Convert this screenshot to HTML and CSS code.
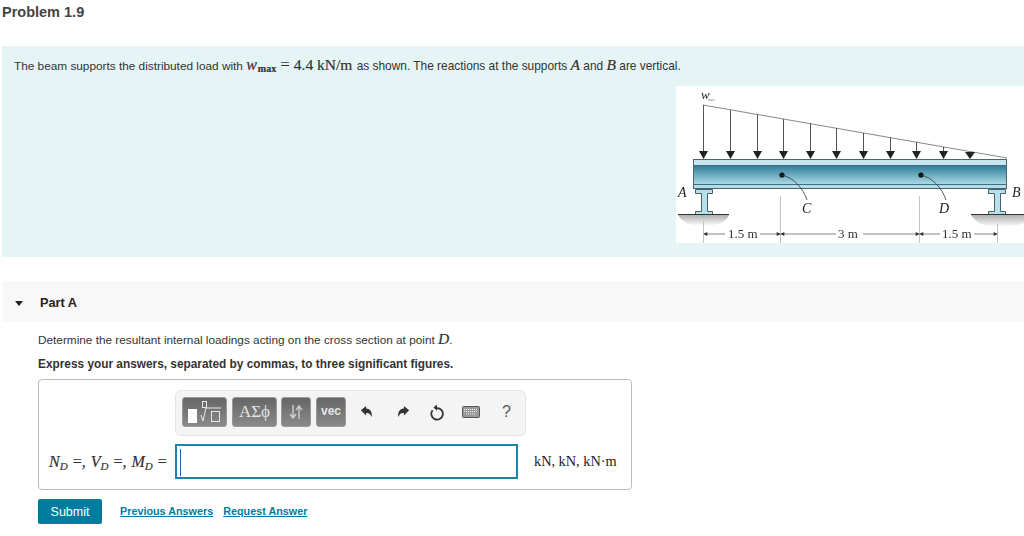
FILE: index.html
```html
<!DOCTYPE html>
<html lang="en">
<head>
<meta charset="utf-8">
<title>Problem 1.9</title>
<link rel="stylesheet" href="styles.css">
</head>
<body>
<h1 class="title">Problem 1.9</h1>
<section class="intro">
  <p class="intro-text"><span class="tight">The beam supports the distributed load with</span> <span class="math math-load"><i class="w">w</i><sub>max</sub><span class="eq">=</span><span class="val">4.4 kN/m</span></span> as shown. The reactions at the supports <i class="math var">A</i> and <i class="math var">B</i> are vertical.</p>
  <div class="figure">
    <svg width="348" height="157" viewBox="0 0 348 157" xmlns="http://www.w3.org/2000/svg">
      <defs>
        <linearGradient id="beam" x1="0" y1="0" x2="0" y2="1">
          <stop offset="0" stop-color="#2c7a97"/>
          <stop offset="1" stop-color="#a9d8e4"/>
        </linearGradient>
        <linearGradient id="ground" x1="0" y1="0" x2="0" y2="1">
          <stop offset="0" stop-color="#b0b0b0"/>
          <stop offset="1" stop-color="#ffffff"/>
        </linearGradient>
        <marker id="tip" viewBox="0 0 6 6" refX="5" refY="3" markerWidth="7" markerHeight="5" orient="auto">
          <path d="M0 0L6 3L0 6Z" fill="#333"/>
        </marker>
      </defs>
      <text x="25" y="13" class="fig-w">w</text>
      <text x="32" y="15" class="fig-tiny">max</text>
      <path d="M27 19L331 72" stroke="#888" fill="none"/>
      <path d="M27.500 19V66M54.500 24V66M81.500 28V66M107.500 33V66M134.500 37V66M160.500 42V66M187.500 47V66M214.500 51V66M240.500 56V66M267.500 61V66" stroke="#555"/>
      <g fill="#222">
        <path d="M23 65L32 65L27.500 73Z"/><path d="M50 65L59 65L54.500 73Z"/><path d="M77 65L86 65L81.500 73Z"/><path d="M103 65L112 65L107.500 73Z"/><path d="M130 65L139 65L134.500 73Z"/><path d="M156 65L165 65L160.500 73Z"/><path d="M183 65L192 65L187.500 73Z"/><path d="M210 65L219 65L214.500 73Z"/><path d="M236 65L245 65L240.500 73Z"/><path d="M263 65L272 65L267.500 73Z"/><path d="M289 66L299 66L294 73Z"/>
      </g>
      <rect x="17.500" y="73.500" width="313" height="29" fill="#b5dde8" stroke="#4b6470"/>
      <rect x="18" y="79" width="312" height="19" fill="url(#beam)"/>
      <rect x="18" y="74" width="312" height="5" fill="#c9e6ee"/>
      <path d="M17 79.500H331M17 98.500H331" stroke="#3d6e82"/>
      <circle cx="106" cy="89" r="2.600" fill="#111"/>
      <circle cx="245" cy="89" r="2.600" fill="#111"/>
      <path d="M106 89C118 92 127 102 131 114M245 89C257 92 266 102 270 114" fill="none" stroke="#333" stroke-width=".8"/>
      <g fill="#b5e0ec" stroke="#47606c">
        <path d="M19.500 103.500H36.500V107.500H31.500V125.500H36.500V128.500H19.500V125.500H25.500V107.500H19.500Z"/>
        <path d="M312.500 103.500H329.500V107.500H324.500V125.500H329.500V128.500H312.500V125.500H318.500V107.500H312.500Z"/>
      </g>
      <path d="M2 129H53C50 136 42 140 27 140C14 140 6 136 2 129Z" fill="url(#ground)"/>
      <path d="M295 129H348V137C340 140 330 141 320 141C308 141 299 136 295 129Z" fill="url(#ground)"/>
      <path d="M2 128.500H53M295 128.500H348" stroke="#333"/>
      <path d="M27.500 135V157M104.500 110V157M243.500 110V157M321.500 138V157" stroke="#c4c4c4" fill="none"/>
      <g stroke="#666" fill="none" stroke-width=".8" marker-end="url(#tip)">
        <path d="M49 148H28"/><path d="M84 148H104"/><path d="M160 148H105"/>
        <path d="M187 148H243"/><path d="M264 148H244"/><path d="M298 148H321"/>
      </g>
      <text x="52" y="152" class="fig-dim">1.5 m</text>
      <text x="162" y="152" class="fig-dim">3 m</text>
      <text x="266" y="152" class="fig-dim">1.5 m</text>
      <text x="2" y="111" class="fig-label">A</text>
      <text x="336" y="111" class="fig-label">B</text>
      <text x="126" y="127" class="fig-label">C</text>
      <text x="263" y="127" class="fig-label">D</text>
    </svg>
  </div>
</section>
<section class="part">
  <header class="part-head"><span class="caret"></span><h2>Part A</h2></header>
  <div class="part-body">
    <p class="question">Determine the resultant internal loadings acting on the cross section at point <i class="math var">D</i>.</p>
    <p class="instruction">Express your answers, separated by commas, to three significant figures.</p>
    <div class="answer">
      <div class="toolbar">
        <button class="tool tool-a" type="button" aria-label="Templates">
          <svg width="36" height="24" viewBox="0 0 36 24"><rect x="1" y="9" width="9" height="14" fill="#fff"/><g fill="none" stroke="#e8e8e8" stroke-width="1"><rect x="15.500" y="1.500" width="4" height="6"/><path d="M14 15l2 6 3-13h15"/><rect x="24.500" y="11.500" width="8" height="10"/></g></svg>
        </button>
        <button class="tool tool-b" type="button">ΑΣϕ</button>
        <button class="tool tool-c" type="button" aria-label="Arrows">
          <svg width="16" height="18" viewBox="0 0 16 18"><path d="M5 2V14M2 11l3 4 3-4" fill="none" stroke="#cfcfcf" stroke-width="1.400"/><path d="M11 16V4M8 7l3-4 3 4" fill="none" stroke="#cfcfcf" stroke-width="1.400"/></svg>
        </button>
        <button class="tool tool-d" type="button">vec</button>
        <span class="actions">
          <svg class="act" width="14" height="14" viewBox="0 0 16 16"><path d="M1 6L7 1V4C12 4 14 8 13.500 14C12 10.500 11 9 7 9V12Z" fill="#333"/></svg>
          <svg class="act act-redo" width="14" height="14" viewBox="0 0 16 16"><path d="M15 6L9 1V4C4 4 2 8 2.500 14C4 10.500 5 9 9 9V12Z" fill="#333"/></svg>
          <svg class="act act-reload" width="16" height="17" viewBox="0 0 18 18"><path d="M9 4A6.500 6.500 0 1 1 4 6.500" fill="none" stroke="#333" stroke-width="2"/><path d="M9 0V7L5 3.500Z" fill="#333"/></svg>
          <svg class="act act-kb" width="18" height="12" viewBox="0 0 18 12"><rect x=".5" y=".5" width="17" height="11" rx="1" fill="#999" stroke="#555"/><path d="M2 3.500H16M2 5.500H16M4 8H14" stroke="#eee" stroke-dasharray="1 1"/></svg>
          <span class="help">?</span>
        </span>
      </div>
      <div class="eq-label"><span class="math math-eq"><i>N<sub>D</sub></i> =, <i>V<sub>D</sub></i> =, <i>M<sub>D</sub></i> =</span></div>
      <div class="input"><span class="cursor"></span></div>
      <div class="units">kN, kN, kN·m</div>
    </div>
    <div class="submit-row">
      <button class="submit" type="button">Submit</button>
      <a class="link" href="#">Previous Answers</a>
      <a class="link" href="#">Request Answer</a>
    </div>
  </div>
</section>
</body>
</html>
```
FILE: styles.css
```css
* { box-sizing: border-box; }
html, body { margin: 0; padding: 0; }
body {
  width: 1024px;
  height: 536px;
  overflow: hidden;
  background: #fff;
  color: #333;
  font-family: "Liberation Sans", Arial, sans-serif;
  font-size: 12px;
}
.title {
  margin: 0;
  padding: 4px 0 0 2px;
  height: 46px;
  font-size: 14.500px;
  line-height: 16px;
  font-weight: bold;
  color: #444;
}
.intro {
  margin-left: 2px;
  height: 211px;
  background: #e5f5f6;
  padding: 12px 0 0 12px;
  display: flex;
  flex-direction: column;
}
.intro-text { margin: 0; line-height: 16px; height: 28px; white-space: nowrap; font-size: 11.900px; }
.tight { font-size: 11.800px; }
.math { font-family: "Liberation Serif", serif; font-size: 15px; line-height: 0; }
.var { font-size: 15.500px; -webkit-text-stroke: .2px #333; }
.math-load { -webkit-text-stroke: .2px #333; margin-right: 1px; }
.math-load .w { font-size: 16px; margin-right: 1px; }
.math-load sub { font-size: 10px; line-height: 0; font-weight: bold; vertical-align: -2px; }
.math-load .eq { margin: 0 4px; font-size: 17px; -webkit-text-stroke: 0; }
.val { font-size: 15.500px; }
.figure {
  align-self: flex-end;
  background: #fff;
  width: 348px;
  height: 157px;
  filter: blur(.35px);
}
.figure svg { display: block; }
.fig-label { font: italic 14px "Liberation Serif", serif; fill: #222; }
.fig-w { font: italic 13px "Liberation Serif", serif; fill: #222; }
.fig-tiny { font: 4px "Liberation Serif", serif; fill: #777; }
.fig-dim { font: 13px "Liberation Serif", serif; fill: #333; }
.part { margin-top: 24px; margin-left: 2px; }
.part-head {
  height: 41px;
  background: #f8f8f8;
  display: flex;
  align-items: center;
  padding: 3px 0 0 13px;
}
.part-head h2 { margin: 0 0 0 17px; font-size: 12.700px; font-weight: bold; color: #222; }
.caret {
  width: 0; height: 0;
  border-left: 4.500px solid transparent;
  border-right: 4.500px solid transparent;
  border-top: 5px solid #222;
}
.part-body { padding: 10px 0 0 36px; }
.question { margin: 0; line-height: 16px; height: 24px; font-size: 11.800px; }
.instruction { margin: 0; line-height: 16px; height: 23px; font-weight: bold; font-size: 11.850px; }
.answer {
  width: 594px;
  height: 111px;
  border: 1px solid #bbb;
  border-radius: 4px;
  display: grid;
  grid-template-columns: 126px 343px 1fr;
  grid-template-rows: 46px 35px;
  row-gap: 8px;
  padding: 10px 0 0 10px;
  margin-bottom: 9px;
}
.toolbar {
  grid-column: 2 / 4;
  width: 351px;
  height: 46px;
  background: #f4f4f4;
  border: 1px solid #e4e4e4;
  border-radius: 6px;
  display: flex;
  align-items: center;
  padding: 0 0 2px 6px;
  gap: 5px;
}
.tool {
  height: 30px;
  padding: 0;
  border: 1px solid #999;
  border-radius: 3px;
  background: linear-gradient(#666, #8a8a8a);
  color: #e4e4e4;
  display: flex;
  align-items: center;
  justify-content: center;
}
.tool-a { width: 45px; }
.tool-b { width: 45px; font: 17px "Liberation Serif", serif; }
.tool-c { width: 30px; margin-left: -1px; }
.tool-d { width: 30px; font: bold 12px "Liberation Sans", sans-serif; padding-bottom: 3px; }
.actions {
  display: flex;
  align-items: center;
  gap: 20px;
  margin-left: 9px;
}
.act { display: block; }
.act-redo { margin-left: 2px; }
.act-reload { margin-left: -1px; }
.act-kb { margin-left: -3px; }
.help { font-size: 16px; color: #555; margin-left: 2px; }
.eq-label { display: flex; align-items: center; color: #333; }
.math-eq { font-size: 16px; line-height: 16px; -webkit-text-stroke: .2px #333; word-spacing: 1px; white-space: nowrap; }
.math-eq sub { font-size: 11px; line-height: 0; vertical-align: -3px; }
.input {
  width: 343px;
  height: 35px;
  border: 2px solid #1c84a5;
  background: #fff;
  padding: 3px;
}
.cursor { display: block; width: 1px; height: 27px; background: #3355bb; }
.units {
  display: flex;
  align-items: center;
  padding-left: 16px;
  font: 14.300px "Liberation Serif", serif;
  color: #222;
}
.submit-row { display: flex; align-items: center; }
.submit {
  width: 64px;
  height: 25px;
  padding: 0;
  border: 0;
  border-radius: 2px;
  background: #007c9e;
  color: #fff;
  font: 12.500px "Liberation Sans", sans-serif;
  margin-right: 18px;
}
.link {
  font-size: 10.800px;
  font-weight: bold;
  color: #007c9e;
  text-decoration: underline;
  margin: 0 10px 2px 0;
}
```
